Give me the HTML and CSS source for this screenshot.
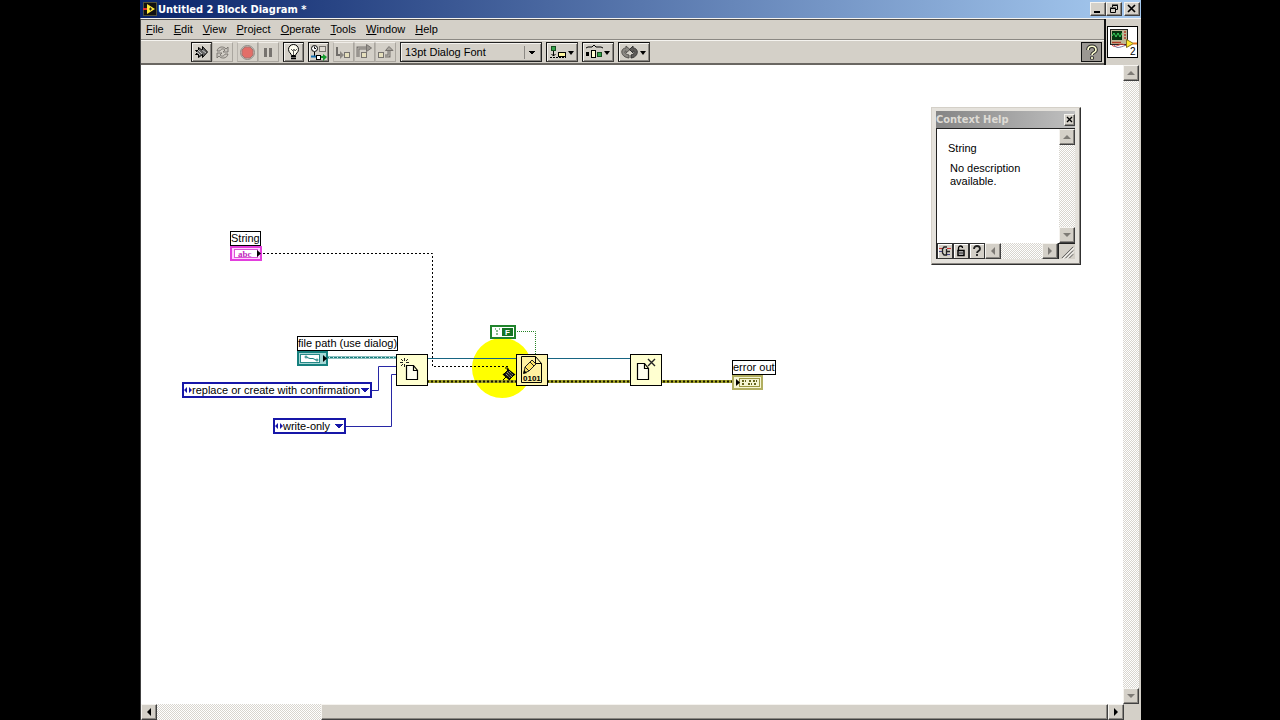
FILE: index.html
```html
<!DOCTYPE html>
<html lang="en">
<head>
<meta charset="utf-8">
<title>Untitled 2 Block Diagram *</title>
<link rel="stylesheet" href="styles.css">
</head>
<body>
<div class="window">
  <header class="titlebar">
    <svg class="app-icon" width="14" height="14" viewBox="0 0 14 14"><rect x=".5" y=".5" width="13" height="13" fill="#111" stroke="#998b30" stroke-dasharray="1 1"/><path d="M4 2l8 5-8 5z" fill="#ffe838"/><path d="M0 7h4" stroke="#e03030" stroke-width="2"/><path d="M6 7h3M7.500 5.500v3" stroke="#222"/></svg>
    <h1 class="title">Untitled 2 Block Diagram *</h1>
    <div class="captions">
      <button class="bevel caption" aria-label="Minimize"><svg width="12" height="10" viewBox="0 0 12 10"><path d="M2 8h6" stroke="#000" stroke-width="2"/></svg></button>
      <button class="bevel caption" aria-label="Restore"><svg width="12" height="10" viewBox="0 0 12 10"><path d="M4.500 3V1.500h5v4H8M4 1h6M2.500 4.500h5v4h-5zM2 4h6" fill="none" stroke="#000"/></svg></button>
      <button class="bevel caption close" aria-label="Close"><svg width="12" height="10" viewBox="0 0 12 10"><path d="M2 1l7 7M9 1L2 8" stroke="#000" stroke-width="1.700"/></svg></button>
    </div>
  </header>

  <div class="chrome">
    <div class="bars">
      <nav class="menubar">
        <button class="menu"><u>F</u>ile</button><button class="menu"><u>E</u>dit</button><button class="menu"><u>V</u>iew</button><button class="menu"><u>P</u>roject</button><button class="menu"><u>O</u>perate</button><button class="menu"><u>T</u>ools</button><button class="menu"><u>W</u>indow</button><button class="menu"><u>H</u>elp</button>
      </nav>
      <div class="toolbar">
        <div class="group">
          <button class="tool raised" aria-label="Run"><svg width="17" height="17" viewBox="0 0 17 17"><path d="M2.500 6.500h3v-3l4 3v-4l5 5.500-5 5.500v-3l-4 3v-3h-3l2-2z" fill="#666" stroke="#000"/><path d="M5 6l4 4M9 6l4 3M4 8l3 3" stroke="#ddd" stroke-width=".8"/></svg></button>
          <button class="tool" aria-label="Run continuously"><svg width="17" height="17" viewBox="0 0 17 17"><path d="M3 7c1-5 7-5 9-2l2-2v5H9l2-2c-2-2-4-1-5 1zM14 10c-1 5-7 5-9 2l-2 2V9h5l-2 2c2 2 4 1 5-1z" fill="#c9c5be" stroke="#77736d" stroke-width=".9"/></svg></button>
        </div>
        <div class="group">
          <button class="tool" aria-label="Abort"><svg width="17" height="17" viewBox="0 0 17 17"><circle cx="8.500" cy="8.500" r="7" fill="#d4d0c8" stroke="#8d8984"/><path d="M6 3h5l3 3v5l-3 3H6l-3-3V6z" fill="#e36e68" stroke="#a37470"/></svg></button>
          <button class="tool" aria-label="Pause"><svg width="17" height="17" viewBox="0 0 17 17"><path d="M5.500 4v9M10.500 4v9" stroke="#77736f" stroke-width="3"/></svg></button>
        </div>
        <div class="group">
          <button class="tool raised" aria-label="Highlight execution"><svg width="17" height="17" viewBox="0 0 17 17"><path d="M6.500 11.500c0-2-3-3-3-6a5 5 0 0 1 10 0c0 3-3 4-3 6z" fill="#fffdf0" stroke="#000"/><path d="M6 5l2 2 1-2 1 2 2-2M8.500 7v4" fill="none" stroke="#333" stroke-width=".8"/><path d="M6 12.500h5M6 14.500h5" stroke="#000" stroke-width="1.500"/></svg></button>
        </div>
        <div class="group">
          <button class="tool raised" aria-label="Retain wire values"><svg width="17" height="17" viewBox="0 0 17 17"><circle cx="4.500" cy="4.500" r="3" fill="#fff" stroke="#000"/><path d="M4.500 2.500v2H6M4.500 8v4" fill="none" stroke="#000"/><rect x="9.500" y="2.500" width="6" height="5" fill="#ddd9d1" stroke="#77736f"/><path d="M1 12.500h6" stroke="#136cae" stroke-width="2"/><path d="M11 13h3" stroke="#149a2e" stroke-width="2"/><path d="M13 10l4 3-4 4z" fill="#149a2e"/><rect x="6.500" y="11.500" width="4" height="4" fill="#fff" stroke="#000"/></svg></button>
        </div>
        <div class="group">
          <button class="tool" aria-label="Step into"><svg width="17" height="17" viewBox="0 0 17 17"><path d="M2 3v8h4" fill="none" stroke="#716e6a" stroke-width="2"/><path d="M5 7l4 4-4 4z" fill="#8d8984"/><rect x="9.500" y="8.500" width="5" height="5" fill="#e5dfbd" stroke="#77736f"/></svg></button>
          <button class="tool" aria-label="Step over"><svg width="17" height="17" viewBox="0 0 17 17"><path d="M2 13V4h9" fill="none" stroke="#77736f" stroke-width="3"/><path d="M2 13V4h9" fill="none" stroke="#bbb7b0"/><path d="M10.500 .5l5 3.500-5 3.500z" fill="#9a9690" stroke="#77736f"/><rect x="5.500" y="8.500" width="5" height="5" fill="#e5dfbd" stroke="#77736f"/></svg></button>
          <button class="tool" aria-label="Step out"><svg width="17" height="17" viewBox="0 0 17 17"><rect x="1.500" y="8.500" width="5" height="5" fill="#e5dfbd" stroke="#77736f"/><path d="M8 12h4V6" fill="none" stroke="#77736f" stroke-width="3"/><path d="M8 12h4V6" fill="none" stroke="#bbb7b0"/><path d="M8.500 6.500l3.500-4 4 4z" fill="#aaa69f" stroke="#77736f"/></svg></button>
        </div>
        <select class="font-select" aria-label="Text settings"><option>13pt Dialog Font</option></select>
        <button class="tool raised wide" aria-label="Align objects"><svg width="29" height="17" viewBox="0 0 29 17"><rect x="3.500" y="2.500" width="4" height="4" fill="#36a34c" stroke="#174e20"/><path d="M2 13.500h16" stroke="#000" stroke-dasharray="2 1"/><path d="M5.500 7v5M3.500 10l2 2 2-2" fill="none" stroke="#000"/><rect x="10.500" y="8.500" width="7" height="4" fill="#fff6a0" stroke="#000"/><path d="M20 7h6l-3 4z"/></svg></button>
        <button class="tool raised wide" aria-label="Distribute objects"><svg width="29" height="17" viewBox="0 0 29 17"><path d="M2 4l2-1h4l2-2 2 2h5l2 1" fill="none" stroke="#000"/><path d="M2 8h3v4H2z"/><rect x="7.500" y="6.500" width="4" height="7" fill="#fffbd0" stroke="#000"/><rect x="13.500" y="8.500" width="4" height="4" fill="#36a34c" stroke="#174e20"/><path d="M20 7h6l-3 4z"/></svg></button>
        <button class="tool raised wide" aria-label="Reorder"><svg width="29" height="17" viewBox="0 0 29 17"><path d="M9 14C0 13 0 4 6 4V2l4 3.500-4 3.500V7C4 7 4 10 9 11z" fill="#8b8883" stroke="#55524e"/><path d="M11 14c8-1 8-10 2-10V2L9.500 5.500 13 9V7c3 0 2 3-2 4z" fill="#5e5b58" stroke="#333"/><path d="M20 7h6l-3 4z"/></svg></button>
        <button class="tool pressed" aria-label="Show context help"><svg width="17" height="17" viewBox="0 0 17 17"><path d="M5 6c0-5 8-5 8 0 0 3-4 2-4 5M9 12.500v3" fill="none" stroke="#222" stroke-width="3.600"/><path d="M5 6c0-5 8-5 8 0 0 3-4 2-4 5M9 13v2" fill="none" stroke="#ffffd2" stroke-width="1.700"/></svg></button>
      </div>
    </div>
    <div class="vi-pane">
      <svg class="vi-icon" width="31" height="32" viewBox="0 0 31 32" role="img" aria-label="VI icon"><rect x=".5" y=".5" width="30" height="31" fill="#fff" stroke="#000"/><rect x="3.500" y="3.500" width="17" height="15" fill="#bdb898" stroke="#222"/><rect x="5" y="5" width="10" height="9" fill="#06360f"/><path d="M5 10l2-3 2 4 2-4 2 4 2-4" fill="none" stroke="#39d15c"/><path d="M17 6h2M17 9h2M17 12h2M5 16.500h9" stroke="#b33c28" stroke-width="1.500"/><path d="M5 19c2 3 6 0 10-1l5 2" fill="none" stroke="#df3d31"/><path d="M7 19c3 5 8 1 13 0" fill="none" stroke="#77739c"/><path d="M19.500 13.500l7 4-7 4z" fill="#ffe92e" stroke="#84701b"/><path d="M26 17.500h4" stroke="#e67b21" stroke-width="2"/><text x="23" y="29" class="svg-label">2</text></svg>
    </div>
  </div>

  <div class="workspace">
    <main class="canvas">
      <svg class="wires" width="100%" height="100%">
        <g transform="translate(-141 -65)" fill="none">
          <circle cx="502" cy="368" r="30" fill="#ffff00"/>
          <path d="M263 253.500H432.500V366.500H508" stroke="#000" stroke-dasharray="2 2"/>
          <path d="M328 357.500H397" stroke="#1b8080" stroke-width="2"/>
          <path d="M329 357.500H397" stroke="#d0eeee" stroke-dasharray="1 3"/>
          <path d="M428 358.500H630" stroke="#176583"/>
          <path d="M372 390.500H378.500V366.500H397M346 426.500H391.500V374.500H397" stroke="#2727a5"/>
          <path d="M427 381.500H732" stroke="#a3a329" stroke-width="3"/>
          <path d="M427 381.500H732" stroke="#161600" stroke-width="2" stroke-dasharray="2 2"/>
          <path d="M517 331.500H535.500V354" stroke="#248424" stroke-dasharray="1 1"/>
        </g>
      </svg>

      <div class="terminal string-terminal">
        <span class="node-label">String</span>
        <svg width="32" height="15" viewBox="0 0 32 15"><rect x="1" y="1" width="30" height="13" fill="#ffd0ff" stroke="#e33edd" stroke-width="2"/><rect x="4.500" y="3.500" width="23" height="8" fill="#fff" stroke="#dc55d6"/><text x="8" y="11" class="svg-abc">abc</text><path d="M27 4l4 3.500-4 3.500z"/></svg>
      </div>
      <div class="terminal path-terminal">
        <span class="node-label">file path (use dialog)</span>
        <svg width="31" height="15" viewBox="0 0 31 15"><rect x="1" y="1" width="29" height="13" fill="#a5d6d4" stroke="#16807e" stroke-width="2"/><rect x="3.500" y="3.500" width="19" height="8" fill="#fff" stroke="#278988"/><circle cx="9" cy="6" r="1" fill="#fff" stroke="#16807e"/><circle cx="20" cy="9" r="1" fill="#fff" stroke="#16807e"/><path d="M10 6.500l3 1h3l3 1.500" fill="none" stroke="#16807e"/><path d="M26 4l4 3.500-4 3.500z"/></svg>
      </div>
      <div class="terminal error-terminal">
        <span class="node-label">error out</span>
        <svg width="31" height="15" viewBox="0 0 31 15"><rect x="1" y="1" width="29" height="13" fill="#f5f5d3" stroke="#b1ae60" stroke-width="2"/><rect x="7.500" y="3.500" width="20" height="8" fill="#f5f5d3" stroke="#9a9640"/><path d="M10 6h4m3 0h2m2 0h4M10 9h3m3 0h4m2 0h3" stroke="#66651e" stroke-width="2" stroke-dasharray="2 1"/><path d="M4 4l4 3.500L4 11z"/></svg>
      </div>

      <div class="enum enum-replace">
        <svg class="enum-step" width="8" height="8" viewBox="0 0 8 8"><path d="M3 1v6L0 4zM5 1v6l3-3z"/></svg>
        <select aria-label="operation"><option>replace or create with confirmation</option></select>
      </div>
      <div class="enum enum-write">
        <svg class="enum-step" width="8" height="8" viewBox="0 0 8 8"><path d="M3 1v6L0 4zM5 1v6l3-3z"/></svg>
        <select aria-label="access"><option>write-only</option></select>
      </div>

      <svg class="node bool-node" width="26" height="14" viewBox="0 0 26 14"><rect x="1" y="1" width="24" height="12" fill="#fff" stroke="#20842c" stroke-width="2"/><path d="M5 4h1m3 0h1M6 6h2M7 8v2" stroke="#64a66b" stroke-width="1.500"/><rect x="12" y="3" width="11" height="8" fill="#157425"/><text x="15" y="10" class="svg-false">F</text></svg>

      <svg class="node open-node" width="32" height="32" viewBox="0 0 32 32"><rect x=".5" y=".5" width="31" height="31" fill="#ffffd0" stroke="#000"/><path d="M10.500 11.500h7l4 5v9h-11zM17.500 11.500v5h4" fill="#fffff0" stroke="#000" stroke-width="1.200"/><path d="M8.500 4v3M8.500 10v3M4 8.500h3M10 8.500h3M5 5l2 2M12 5l-2 2M5 12l2-2" stroke="#222"/></svg>
      <svg class="node write-node" width="32" height="32" viewBox="0 0 32 32"><rect x=".5" y=".5" width="31" height="31" fill="#fff5b0" stroke="#000"/><path d="M5.500 2.500h14l6 7v19h-20zM19.500 2.500v7h6" fill="#fff1a0" stroke="#000"/><path d="M8 19l1-6 7-7 4 4-7 7zM9 13l4 4M14 8l4 4" fill="#ffe56a" stroke="#222"/><path d="M7 20l1-4 3 3z"/><text x="7" y="27" class="svg-bits">0101</text></svg>
      <svg class="node close-node" width="32" height="32" viewBox="0 0 32 32"><rect x=".5" y=".5" width="31" height="31" fill="#ffffd0" stroke="#000"/><path d="M7.500 9.500h7l4 5v11h-11zM14.500 9.500v5h4" fill="#fffff0" stroke="#000" stroke-width="1.200"/><path d="M18 5l7 7M25 5l-7 7" stroke="#222" stroke-width="1.400"/></svg>
      <svg class="node spool" width="16" height="16" viewBox="0 0 16 16"><path d="M6 3l8 6M2 8l7 6" stroke="#000" stroke-width="1.500"/><path d="M7 4l6 5-4 4-6-5z" fill="#222" stroke="#000"/><path d="M6 6l5 5M8 5l4 4M5 8l4 4" stroke="#ffffc0" stroke-width=".8" stroke-dasharray="1 1"/><path d="M2 14l3-3M4 2h3v2" fill="none" stroke="#000"/></svg>

      <aside class="help">
        <header class="help-title"><h2>Context Help</h2><button class="bevel help-close" aria-label="Close help"><svg width="7" height="7" viewBox="0 0 7 7"><path d="M1 1l5 5M6 1L1 6" stroke="#000" stroke-width="1.300"/></svg></button></header>
        <div class="help-main">
          <div class="help-text"><h3>String</h3><p>No description available.</p></div>
          <div class="scroll-v"><button class="bevel scroll-btn dim" aria-label="Scroll help up"><svg width="8" height="8" viewBox="0 0 8 8"><path d="M0 6h8L4 2z"/></svg></button><button class="bevel scroll-btn dim" aria-label="Scroll help down"><svg width="8" height="8" viewBox="0 0 8 8"><path d="M0 2h8L4 6z"/></svg></button></div>
        </div>
        <div class="help-foot">
          <button class="help-tool" aria-label="Show optional terminals"><svg width="14" height="14" viewBox="0 0 14 14"><path d="M1 4.500h4M9 4.500h4" stroke="#c33"/><path d="M1 7.500h4M9 10.500h3" stroke="#448"/><path d="M9 3H6L4.500 5v4L6 11h2.500V5M8 7.500h4" fill="none" stroke="#222" stroke-width="1.300"/></svg></button>
          <button class="help-tool" aria-label="Lock help"><svg width="14" height="14" viewBox="0 0 14 14"><path d="M4.500 7V4a2 2 0 0 1 4 0" fill="none" stroke="#000" stroke-width="1.300"/><rect x="4" y="6.500" width="6" height="5" fill="#ddd" stroke="#000" stroke-width="1.500"/><path d="M5 9h4" stroke="#000"/></svg></button>
          <button class="help-tool" aria-label="More help"><svg width="14" height="14" viewBox="0 0 14 14"><path d="M4 5c0-4 6-4 6 0 0 2-3 2-3 4M7 10v2" fill="none" stroke="#222" stroke-width="1.800"/></svg></button>
          <div class="scroll-h"><button class="bevel scroll-btn dim" aria-label="Scroll help left"><svg width="8" height="8" viewBox="0 0 8 8"><path d="M6 0v8L2 4z"/></svg></button><button class="bevel scroll-btn dim" aria-label="Scroll help right"><svg width="8" height="8" viewBox="0 0 8 8"><path d="M2 0v8l4-4z"/></svg></button></div>
          <svg class="grip" width="17" height="16" viewBox="0 0 17 16"><path d="M3 15L15 3M7 15l8-8M11 15l4-4" stroke="#555"/><path d="M4 16L16 4M8 16l8-8" stroke="#fff"/></svg>
        </div>
      </aside>
    </main>
    <div class="scroll-v main-v"><button class="bevel scroll-btn dim" aria-label="Scroll up"><svg width="8" height="8" viewBox="0 0 8 8"><path d="M0 6h8L4 2z"/></svg></button><button class="bevel scroll-btn dim" aria-label="Scroll down"><svg width="8" height="8" viewBox="0 0 8 8"><path d="M0 2h8L4 6z"/></svg></button></div>
  </div>
  <div class="bottom">
    <div class="scroll-h main-h">
      <button class="bevel scroll-btn" aria-label="Scroll left"><svg width="8" height="8" viewBox="0 0 8 8"><path d="M6 0v8L2 4z"/></svg></button>
      <div class="track"><div class="bevel thumb"></div></div>
      <button class="bevel scroll-btn" aria-label="Scroll right"><svg width="8" height="8" viewBox="0 0 8 8"><path d="M2 0v8l4-4z"/></svg></button>
    </div>
  </div>
</div>
</body>
</html>
```
FILE: styles.css
```css
* { box-sizing: border-box; }

body {
  margin: 0;
  padding: 0 139px 0 140px;
  background: #000;
  color: #000;
  font: 11px/13px "Liberation Sans", Arial, sans-serif;
}

button, select {
  margin: 0;
  padding: 0;
  border: 0;
  border-radius: 0;
  background: #d4d0c8;
  color: inherit;
  font: inherit;
}

select { appearance: none; }
h1, h2, h3, p { margin: 0; font-size: inherit; }
svg { display: block; flex: none; }

.window {
  display: flex;
  flex-direction: column;
  min-height: 100vh;
  background: #d4d0c8;
}

.bevel {
  display: flex;
  align-items: center;
  justify-content: center;
  border: 1px solid;
  border-color: #f5f3ef #404040 #404040 #f5f3ef;
  background: #d4d0c8;
  box-shadow: inset -1px -1px #8b8883;
}

.titlebar {
  display: flex;
  align-items: center;
  height: 18px;
  padding: 0 1px 0 3px;
  background: linear-gradient(90deg, #0a246a, #a6caf0);
  color: #fff;
}
.title, .help-title { font-family: "DejaVu Sans Condensed", "DejaVu Sans", sans-serif; }
.title { flex: 1; padding-left: 1px; font-weight: bold; }
.captions { display: flex; }
.caption { width: 16px; height: 14px; }
.close { margin-left: 2px; }

.chrome {
  display: flex;
  height: 47px;
  border-left: 1px solid #404040;
  border-top: 1px solid #f5f3ef;
}
.bars { flex: 1; display: flex; flex-direction: column; }
.menubar {
  display: flex;
  align-items: center;
  gap: 10px;
  height: 21px;
  padding-left: 5px;
  border-top: 1px solid #55524e;
  border-bottom: 1px solid #8b8883;
}
.toolbar {
  display: flex;
  align-items: center;
  gap: 4px;
  height: 25px;
  padding: 0 2px 0 50px;
  border-top: 1px solid #f5f3ef;
  border-bottom: 2px solid #6a6762;
}
.group { display: flex; }
.tool {
  display: flex;
  align-items: center;
  justify-content: center;
  width: 21px;
  height: 20px;
  border: 1px solid;
  border-color: #f0ede8 #aaa69f #aaa69f #b8b4ad;
}
.raised { border-color: #111 #403e3b #403e3b #111; box-shadow: inset 1px 1px #f5f3ef, inset -1px -1px #8b8883; }
.wide { width: 32px; }
.pressed { margin-left: auto; background: #9b9792; border-color: #111; }
.font-select {
  width: 142px;
  height: 20px;
  padding-left: 4px;
  border: 1px solid #222;
  box-shadow: inset 1px 1px #f5f3ef, inset -1px -1px #8b8883;
  background:
    conic-gradient(from -37deg at 50% 100%, #000 74deg, transparent 0) right 6px top 8px / 6px 4px no-repeat,
    linear-gradient(#8b8883, #8b8883) right 16px top 3px / 1px 13px no-repeat,
    #d4d0c8;
}

.vi-pane {
  width: 37px;
  padding: 7px 3px 0 1px;
  border-left: 2px solid #111;
}

.workspace { flex: 1; display: flex; }
.canvas {
  position: relative;
  flex: 1;
  overflow: hidden;
  border-left: 1px solid #404040;
  background: #fff;
}
.wires { position: absolute; inset: 0; }

.scroll-v, .scroll-h {
  display: flex;
  justify-content: space-between;
  background: repeating-conic-gradient(#d8d5ce 0 25%, #fff 0 50%) 0 0 / 2px 2px;
}
.scroll-v { flex-direction: column; width: 16px; }
.scroll-btn { width: 16px; height: 16px; }
.dim svg { fill: #7e7b76; }
.bottom { padding-right: 17px; border-left: 1px solid #404040; }
.main-v { margin-right: 2px; }
.track { flex: 1; padding-left: 16.7%; }
.thumb { height: 16px; }

.terminal { position: absolute; display: flex; flex-direction: column; align-items: flex-start; }
.node-label {
  border: 1px solid #000;
  background: #fff;
  line-height: 13px;
  white-space: nowrap;
}
.string-terminal { left: 89px; top: 166px; }
.path-terminal { left: 156px; top: 271px; }
.error-terminal { left: 591px; top: 295px; }

.enum {
  position: absolute;
  display: flex;
  align-items: center;
  height: 16px;
  border: 2px solid #1717a8;
  background: #fff;
  fill: #1717a8;
}
.enum select {
  flex: 1;
  background: conic-gradient(from -45deg at 50% 100%, #1717a8 90deg, transparent 0) right 1px top 4px / 8px 4px no-repeat;
}
.enum-replace { left: 41px; top: 317px; width: 190px; }
.enum-write { left: 132px; top: 353px; width: 73px; }

.node { position: absolute; }
.bool-node { left: 349px; top: 260px; }
.open-node { left: 255px; top: 289px; }
.write-node { left: 375px; top: 289px; }
.close-node { left: 489px; top: 289px; }
.spool { left: 360px; top: 301px; }

.svg-label { font-size: 10px; }
.svg-abc { font: bold 9px "Liberation Serif", serif; fill: #c229be; }
.svg-false { font: bold 8px "Liberation Sans", sans-serif; fill: #fff; }
.svg-bits { font: bold 8px "Liberation Sans", sans-serif; }

.help {
  position: absolute;
  right: 42px;
  top: 42px;
  width: 150px;
  padding: 3px 5px 5px 4px;
  border: 1px solid;
  border-color: #d4d0c8 #303030 #303030 #d4d0c8;
  background: #e5e2dc;
  box-shadow: inset -1px -1px #8b8883;
}
.help-title {
  display: flex;
  align-items: center;
  height: 17px;
  background: linear-gradient(90deg, #858585, #c0c0c0);
  color: #dedbd5;
}
.help-title h2 { flex: 1; }
.help-close { width: 11px; height: 12px; }
.help-main { display: flex; height: 115px; border: 1px solid #222; border-width: 1px 0 0 1px; background: #fff; }
.help-text { flex: 1; padding: 13px 4px 0 11px; }
.help-text h3 { font-weight: normal; }
.help-text p { padding: 7px 0 0 2px; }
.help-foot { display: flex; height: 16px; border-left: 1px solid #222; }
.help-tool { display: flex; align-items: center; justify-content: center; width: 16px; border: 1px solid #333; box-shadow: inset 1px 1px #fff; }
.help-foot .scroll-h { flex: 1; }
.grip { background: #d4d0c8; border: 1px solid #222; border-width: 1px 0 0 1px; }
```
